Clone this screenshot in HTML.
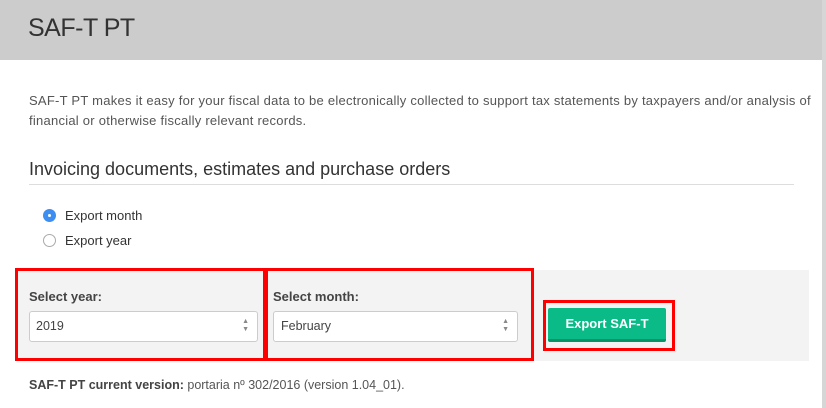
<!DOCTYPE html><html><head><style>
body{margin:0;width:826px;height:408px;background:#fff;font-family:"Liberation Sans",sans-serif;position:relative;overflow:hidden;color:#555}
.a{position:absolute;white-space:nowrap}
</style></head><body>
<div class="a" style="left:0;top:0;width:826px;height:60px;background:#cccccc"></div>
<div class="a" style="left:822px;top:0;width:4px;height:408px;background:#d6d6d6"></div>
<div class="a" style="left:28px;top:14px;font-size:25px;color:#333;letter-spacing:-0.5px">SAF-T PT</div>
<div class="a" style="left:29px;top:91px;font-size:13px;line-height:20px;color:#555;letter-spacing:0.25px">SAF-T PT makes it easy for your fiscal data to be electronically collected to support tax statements by taxpayers and/or analysis of<br>financial or otherwise fiscally relevant records.</div>
<div class="a" style="left:29px;top:159px;font-size:18px;color:#333">Invoicing documents, estimates and purchase orders</div>
<div class="a" style="left:29px;top:184px;width:765px;height:1px;background:#ddd"></div>
<div class="a" style="left:43px;top:209px;width:13px;height:13px;border-radius:50%;background:#3d8ef0"><div style="position:absolute;left:5px;top:5px;width:3px;height:3px;border-radius:50%;background:#fff"></div></div>
<div class="a" style="left:65px;top:208px;font-size:13px;color:#333">Export month</div>
<div class="a" style="left:43px;top:234px;width:11px;height:11px;border-radius:50%;border:1px solid #aaa;background:#fff"></div>
<div class="a" style="left:65px;top:233px;font-size:13px;color:#333">Export year</div>
<div class="a" style="left:16px;top:270px;width:793px;height:91px;background:#f3f3f3"></div>
<div class="a" style="left:15px;top:268px;width:247px;height:87px;border:3px solid #f00"></div>
<div class="a" style="left:263px;top:268px;width:265px;height:87px;border:3px solid #f00"></div>
<div class="a" style="left:29px;top:289px;font-size:13px;font-weight:bold;color:#444">Select year:</div>
<div class="a" style="left:273px;top:289px;font-size:13px;font-weight:bold;color:#444">Select month:</div>
<div class="a" style="left:29px;top:311px;width:227px;height:29px;background:#fff;border:1px solid #ccc;border-radius:3px"><span style="position:absolute;left:6px;top:7px;font-size:12.5px;color:#444">2019</span><span style="position:absolute;right:8px;top:6px;font-size:7px;line-height:8px;color:#888">▲<br>▼</span></div>
<div class="a" style="left:273px;top:311px;width:243px;height:29px;background:#fff;border:1px solid #ccc;border-radius:3px"><span style="position:absolute;left:7px;top:7px;font-size:12.5px;color:#444">February</span><span style="position:absolute;right:8px;top:6px;font-size:7px;line-height:8px;color:#888">▲<br>▼</span></div>
<div class="a" style="left:543px;top:300px;width:126px;height:45px;border:3px solid #f00"></div>
<div class="a" style="left:548px;top:308px;width:118px;height:31px;background:#0bbb87;border-bottom:3px solid #089468;border-radius:2px;color:#fff;font-weight:bold;font-size:13px;text-align:center;line-height:31px">Export SAF-T</div>
<div class="a" style="left:29px;top:378px;font-size:12.5px;color:#555"><b style="color:#444">SAF-T PT current version:</b> portaria nº 302/2016 (version 1.04_01).</div>
</body></html>
